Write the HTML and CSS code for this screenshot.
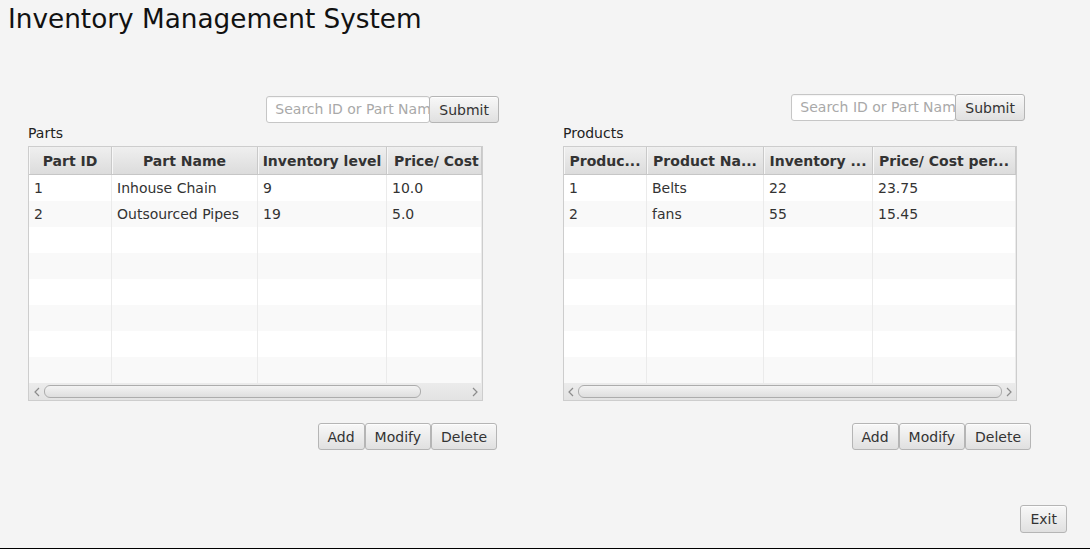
FILE: index.html
```html
<!DOCTYPE html>
<html lang="en">
<head>
<meta charset="utf-8">
<title>Inventory Management System</title>
<link rel="stylesheet" href="styles.css">
</head>
<body>
<div class="app">
  <h1 class="title">Inventory Management System</h1>
  <div class="main">
    <section class="panel panel-parts">
      <div class="search-row">
        <div class="search search-parts"><span>Search ID or Part Name</span></div>
        <button class="btn">Submit</button>
      </div>
      <div class="panel-label">Parts</div>
      <div class="table table-parts">
        <div class="row thead">
          <div class="th">Part ID</div>
          <div class="th">Part Name</div>
          <div class="th">Inventory level</div>
          <div class="th">Price/ Cost</div>
        </div>
        <div class="tbody">
          <div class="row"><div class="td">1</div><div class="td">Inhouse Chain</div><div class="td">9</div><div class="td">10.0</div></div>
          <div class="row"><div class="td">2</div><div class="td">Outsourced Pipes</div><div class="td">19</div><div class="td">5.0</div></div>
          <div class="row"><div class="td"></div><div class="td"></div><div class="td"></div><div class="td"></div></div>
          <div class="row"><div class="td"></div><div class="td"></div><div class="td"></div><div class="td"></div></div>
          <div class="row"><div class="td"></div><div class="td"></div><div class="td"></div><div class="td"></div></div>
          <div class="row"><div class="td"></div><div class="td"></div><div class="td"></div><div class="td"></div></div>
          <div class="row"><div class="td"></div><div class="td"></div><div class="td"></div><div class="td"></div></div>
          <div class="row"><div class="td"></div><div class="td"></div><div class="td"></div><div class="td"></div></div>
        </div>
        <div class="hscroll">
          <div class="sb-btn"><svg width="6" height="10" viewBox="0 0 6 10"><polyline points="5,1 1,5 5,9" fill="none" stroke="#8c8c8c" stroke-width="1.2"/></svg></div>
          <div class="sb-track"><div class="sb-thumb"></div></div>
          <div class="sb-btn"><svg width="6" height="10" viewBox="0 0 6 10"><polyline points="1,1 5,5 1,9" fill="none" stroke="#8c8c8c" stroke-width="1.2"/></svg></div>
        </div>
      </div>
      <div class="btn-row">
        <button class="btn">Add</button><button class="btn">Modify</button><button class="btn">Delete</button>
      </div>
    </section>

    <section class="panel panel-products">
      <div class="search-row">
        <div class="search search-products"><span>Search ID or Part Name</span></div>
        <button class="btn">Submit</button>
      </div>
      <div class="panel-label">Products</div>
      <div class="table table-products">
        <div class="row thead">
          <div class="th">Produc...</div>
          <div class="th">Product Na...</div>
          <div class="th">Inventory ...</div>
          <div class="th">Price/ Cost per...</div>
        </div>
        <div class="tbody">
          <div class="row"><div class="td">1</div><div class="td">Belts</div><div class="td">22</div><div class="td">23.75</div></div>
          <div class="row"><div class="td">2</div><div class="td">fans</div><div class="td">55</div><div class="td">15.45</div></div>
          <div class="row"><div class="td"></div><div class="td"></div><div class="td"></div><div class="td"></div></div>
          <div class="row"><div class="td"></div><div class="td"></div><div class="td"></div><div class="td"></div></div>
          <div class="row"><div class="td"></div><div class="td"></div><div class="td"></div><div class="td"></div></div>
          <div class="row"><div class="td"></div><div class="td"></div><div class="td"></div><div class="td"></div></div>
          <div class="row"><div class="td"></div><div class="td"></div><div class="td"></div><div class="td"></div></div>
          <div class="row"><div class="td"></div><div class="td"></div><div class="td"></div><div class="td"></div></div>
        </div>
        <div class="hscroll">
          <div class="sb-btn"><svg width="6" height="10" viewBox="0 0 6 10"><polyline points="5,1 1,5 5,9" fill="none" stroke="#8c8c8c" stroke-width="1.2"/></svg></div>
          <div class="sb-track"><div class="sb-thumb"></div></div>
          <div class="sb-btn"><svg width="6" height="10" viewBox="0 0 6 10"><polyline points="1,1 5,5 1,9" fill="none" stroke="#8c8c8c" stroke-width="1.2"/></svg></div>
        </div>
      </div>
      <div class="btn-row">
        <button class="btn">Add</button><button class="btn">Modify</button><button class="btn">Delete</button>
      </div>
    </section>
  </div>
  <div class="footer">
    <button class="btn btn-exit">Exit</button>
  </div>
</div>
</body>
</html>
```

FILE: styles.css
```css
html, body {
  margin: 0;
  padding: 0;
}

body {
  background: #f4f4f4;
  font-family: "DejaVu Sans", "Liberation Sans", sans-serif;
  font-size: 14px;
  color: #333;
}

.app {
  height: 548px;
  border-bottom: 1px solid #000;
  display: flex;
  flex-direction: column;
  overflow: hidden;
}

.title {
  margin: 0;
  padding: 4px 0 0 8px;
  font-size: 26.3px;
  font-weight: normal;
  line-height: 30px;
  color: #111;
}

.main {
  display: flex;
  gap: 64px;
  padding-left: 28px;
}

.panel {
  display: flex;
  flex-direction: column;
}

.panel-parts {
  width: 471px;
}

.panel-products {
  width: 468px;
}

/* search */
.search-row {
  display: flex;
  justify-content: flex-end;
  height: 27px;
}

.panel-parts .search-row {
  margin-top: 62px;
}

.panel-products .search-row {
  margin-top: 60px;
  padding-right: 6px;
}

.search {
  height: 27px;
  box-sizing: border-box;
  border: 1px solid #c6c6c6;
  border-radius: 3px;
  background: #fff;
  box-shadow: inset 0 1px 1px rgba(0, 0, 0, 0.04);
  padding: 0 8px;
  line-height: 25px;
  color: #a9a9a9;
  white-space: nowrap;
  overflow: hidden;
  margin-right: -1px;
}

.search-parts {
  width: 164px;
}

.search-products {
  width: 165px;
}

.panel-label {
  height: 20px;
  line-height: 20px;
  color: #222;
}

.panel-products .panel-label {
  margin-top: 2px;
}

/* table */
.table {
  margin-top: 3px;
  height: 255px;
  box-sizing: border-box;
  border: 1px solid #cdcdcd;
  background: #fff;
  overflow: hidden;
  display: flex;
  flex-direction: column;
}

.table-parts {
  width: 455px;
}

.table-products {
  width: 454px;
}

.row {
  display: grid;
}

.table-parts .row {
  grid-template-columns: 83px 146px 129px 95px;
}

.table-products .row {
  grid-template-columns: 83px 117px 109px 143px;
}

.thead {
  height: 28px;
  box-sizing: border-box;
  background: linear-gradient(#efefef, #dcdcdc);
  border-bottom: 1px solid #c6c6c6;
}

.th {
  font-weight: bold;
  text-align: center;
  line-height: 28px;
  border-right: 1px solid #c9c9c9;
  box-shadow: inset 1px 0 0 #f7f7f7;
  white-space: nowrap;
  overflow: hidden;
  color: #333;
}

.table-parts .th:last-child {
  text-align: left;
  padding-left: 7px;
}

.td {
  height: 26px;
  line-height: 26px;
  padding-left: 5px;
  border-right: 1px solid #ebebeb;
  white-space: nowrap;
  overflow: hidden;
  color: #333;
}

.tbody .row:nth-child(even) {
  background: #f9f9f9;
}

/* scrollbar */
.hscroll {
  height: 17px;
  display: flex;
  align-items: center;
  background: linear-gradient(#ebebeb, #e3e3e3);
}

.sb-btn {
  width: 15px;
  height: 17px;
  display: flex;
  align-items: center;
  justify-content: center;
}

.sb-track {
  flex: 1;
  display: flex;
  align-items: center;
}

.sb-thumb {
  height: 13px;
  box-sizing: border-box;
  border: 1px solid #acacac;
  border-radius: 6px;
  background: linear-gradient(#f3f3f3, #dedede);
}

.table-parts .sb-thumb {
  width: 377px;
}

.table-products .sb-thumb {
  width: 424px;
}

/* buttons */
.btn {
  font-family: inherit;
  font-size: 14px;
  color: #333;
  height: 27px;
  padding: 0 9px;
  margin: 0;
  box-sizing: border-box;
  border: 1px solid #b5b5b5;
  border-radius: 3px;
  background: linear-gradient(#f8f8f8, #e0e0e0);
  box-shadow: inset 0 1px 0 #fdfdfd;
}

.btn-row {
  display: flex;
  justify-content: flex-end;
  margin-top: 22px;
}

.panel-parts .btn-row {
  padding-right: 2px;
}

.footer {
  display: flex;
  justify-content: flex-end;
  padding-right: 23px;
  margin-top: 55px;
}

.btn-exit {
  height: 28px;
}
```
